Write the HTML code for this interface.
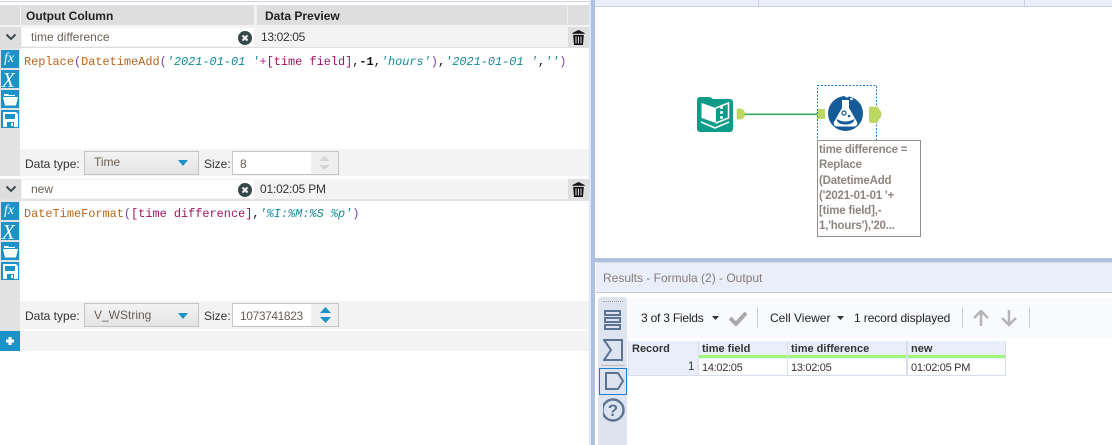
<!DOCTYPE html>
<html><head><meta charset="utf-8">
<style>
html,body{margin:0;padding:0;background:#fff}
#p{position:relative;width:1112px;height:445px;overflow:hidden;background:#fff;font-family:"Liberation Sans",sans-serif;font-size:12px;color:#222}
#p div,#p svg,#p span.a{position:absolute}
.t{white-space:nowrap;line-height:14px}
.c{white-space:pre;font-family:"Liberation Mono",monospace;font-size:11.9px;line-height:14px;font-weight:normal}
.fn{color:#b8651b}.b{color:#7a3fb0}.s{color:#0e8c96;font-style:italic}.f{color:#a3135f}.o{color:#d4148c}.k{color:#111}.br{color:#a3135f}
.btn{left:1px;width:18px;height:18px;background:#1b92c8}
</style></head><body><div id="p">

<!-- left panel -->
<div style="left:0;top:0;width:590px;height:445px;background:#fff"></div>
<div style="left:0;top:1px;width:590px;height:1px;background:#cfd3e6"></div>
<div style="left:0;top:5px;width:589px;height:20px;background:#dedede"></div>
<div style="left:20px;top:5px;width:1px;height:20px;background:#f2f2f2"></div>
<div style="left:254px;top:5px;width:3px;height:20px;background:#f2f2f2"></div>
<div style="left:567px;top:5px;width:1px;height:20px;background:#f2f2f2"></div>
<div class="t" style="left:26px;top:9px;font-weight:bold;color:#222">Output Column</div>
<div class="t" style="left:265px;top:9px;font-weight:bold;color:#222">Data Preview</div>

<!-- row 1 -->
<div style="left:0;top:25px;width:589px;height:23px;background:#f3f3f3"></div>
<div style="left:0;top:27px;width:21px;height:20px;background:#dedede"></div>
<div style="left:22px;top:28px;width:232px;height:18px;background:#fff"></div>
<div style="left:0;top:47px;width:589px;height:1px;background:#dedede"></div>
<div style="left:568px;top:27px;width:21px;height:20px;background:#dedede"></div>
<svg style="left:5px;top:33px" width="12" height="8" viewBox="0 0 12 8"><path d="M1.500 1.500 6 6 10.500 1.500" fill="none" stroke="#3d4a4c" stroke-width="2"/></svg>
<div class="t" style="left:31px;top:30px;color:#6b5f55">time difference</div>
<svg style="left:238px;top:31px" width="14" height="14" viewBox="0 0 14 14"><circle cx="7" cy="7" r="7" fill="#36474a"/><path d="M4.500 4.500 9.500 9.500M9.500 4.500 4.500 9.500" stroke="#fff" stroke-width="2"/></svg>
<div class="t" style="left:261px;top:30px;color:#333;letter-spacing:-.35px">13:02:05</div>
<svg style="left:571px;top:29px" width="15" height="17" viewBox="0 0 15 16"><path d="M1 4.200C2 2.600 5 2 5.500 1.500 6 .5 9 .5 9.500 1.500 10 2 13 2.600 14 4.200Z" fill="#111"/><path d="M2.200 5.400h10.600L12 15.500H3Z" fill="#111"/><path d="M5 7v7M7.500 7v7M10 7v7" stroke="#dedede" stroke-width="1"/></svg>

<!-- side column 1 -->
<div style="left:0;top:48px;width:20px;height:130px;background:#e2e2e2"></div>
<div class="btn" style="top:50px"></div><div class="btn" style="top:70px"></div><div class="btn" style="top:90px"></div><div class="btn" style="top:110px"></div>
<div class="t" style="left:4px;top:51px;color:#fff;font:italic 14px 'Liberation Serif',serif">fx</div>
<div class="t" style="left:2px;top:68px;color:#fff;font:italic 21px 'Liberation Serif',serif">X</div>
<svg style="left:3px;top:93px" width="15" height="13" viewBox="0 0 15 13"><path d="M1 3V1h4l1 1h6v1ZM0 4h15l-2 8.500H2Z" fill="#fff"/></svg>
<svg style="left:3px;top:112px" width="15" height="15" viewBox="0 0 15 15"><path d="M0 0h13l2 2v13H0Z" fill="#fff"/><path d="M2 2h10v5H2ZM4 10h7v5H4Z" fill="#1b92c8"/><path d="M8 11h2v3H8Z" fill="#fff"/></svg>

<div class="c" style="left:24px;top:55px"><span class="fn">Replace</span><span class="b">(</span><span class="fn">DatetimeAdd</span><span class="b">(</span><span class="s">'2021-01-01 '</span><span class="o">+</span><span class="br">[time field]</span><span class="k">,</span><b class="k">-1</b><span class="k">,</span><span class="s">'hours'</span><span class="b">)</span><span class="k">,</span><span class="s">'2021-01-01 '</span><span class="k">,</span><span class="s">''</span><span class="b">)</span></div>

<div style="left:20px;top:149px;width:569px;height:27px;background:#f3f3f3"></div>
<div class="t" style="left:25px;top:157px;color:#333">Data type:</div>
<div style="left:84px;top:151px;width:113px;height:22px;border:1px solid #c4c4c4;background:linear-gradient(#f3f3f3,#e4e4e4)"></div>
<div class="t" style="left:94px;top:155px;color:#6b5f55">Time</div>
<svg style="left:178px;top:160px" width="10" height="6"><path d="M0 0h10L5 6Z" fill="#1b92c8"/></svg>
<div class="t" style="left:204px;top:157px;color:#333">Size:</div>
<div style="left:232px;top:151px;width:105px;height:22px;border:1px solid #c4c4c4;background:#fff"></div>
<div style="left:311px;top:152px;width:27px;height:22px;background:#efefef"></div>
<svg style="left:319px;top:156px" width="11" height="15"><path d="M0 5h11L5.500 0ZM0 9h11L5.500 14Z" fill="#d6d6d6"/></svg>
<div class="t" style="left:240px;top:157px;color:#6b5f55">8</div>

<!-- row 2 -->
<div style="left:0;top:176px;width:589px;height:3px;background:#fff"></div>
<div style="left:0;top:179px;width:21px;height:20px;background:#dedede"></div>
<div style="left:21px;top:179px;width:568px;height:22px;background:#f3f3f3"></div>
<div style="left:22px;top:180px;width:232px;height:18px;background:#fff"></div>
<div style="left:568px;top:179px;width:21px;height:20px;background:#dedede"></div>
<div style="left:0;top:199px;width:589px;height:2px;background:#e3e3e3"></div>
<svg style="left:5px;top:185px" width="12" height="8" viewBox="0 0 12 8"><path d="M1.500 1.500 6 6 10.500 1.500" fill="none" stroke="#3d4a4c" stroke-width="2"/></svg>
<div class="t" style="left:31px;top:182px;color:#6b5f55">new</div>
<svg style="left:238px;top:183px" width="14" height="14" viewBox="0 0 14 14"><circle cx="7" cy="7" r="7" fill="#36474a"/><path d="M4.500 4.500 9.500 9.500M9.500 4.500 4.500 9.500" stroke="#fff" stroke-width="2"/></svg>
<div class="t" style="left:260px;top:182px;color:#333;letter-spacing:-.2px">01:02:05 PM</div>
<svg style="left:571px;top:181px" width="15" height="17" viewBox="0 0 15 16"><path d="M1 4.200C2 2.600 5 2 5.500 1.500 6 .5 9 .5 9.500 1.500 10 2 13 2.600 14 4.200Z" fill="#111"/><path d="M2.200 5.400h10.600L12 15.500H3Z" fill="#111"/><path d="M5 7v7M7.500 7v7M10 7v7" stroke="#dedede" stroke-width="1"/></svg>

<!-- side column 2 -->
<div style="left:0;top:201px;width:20px;height:130px;background:#e2e2e2"></div>
<div class="btn" style="top:202px"></div><div class="btn" style="top:222px"></div><div class="btn" style="top:242px"></div><div class="btn" style="top:262px"></div>
<div class="t" style="left:4px;top:203px;color:#fff;font:italic 14px 'Liberation Serif',serif">fx</div>
<div class="t" style="left:2px;top:220px;color:#fff;font:italic 21px 'Liberation Serif',serif">X</div>
<svg style="left:3px;top:245px" width="15" height="13" viewBox="0 0 15 13"><path d="M1 3V1h4l1 1h6v1ZM0 4h15l-2 8.500H2Z" fill="#fff"/></svg>
<svg style="left:3px;top:264px" width="15" height="15" viewBox="0 0 15 15"><path d="M0 0h13l2 2v13H0Z" fill="#fff"/><path d="M2 2h10v5H2ZM4 10h7v5H4Z" fill="#1b92c8"/><path d="M8 11h2v3H8Z" fill="#fff"/></svg>

<div class="c" style="left:24px;top:207px"><span class="fn">DateTimeFormat</span><span class="b">(</span><span class="br">[time difference]</span><span class="k">,</span><span class="s">'%I:%M:%S %p'</span><span class="b">)</span></div>

<div style="left:20px;top:301px;width:569px;height:28px;background:#f3f3f3"></div>
<div class="t" style="left:25px;top:309px;color:#333">Data type:</div>
<div style="left:84px;top:303px;width:113px;height:22px;border:1px solid #c4c4c4;background:linear-gradient(#f3f3f3,#e4e4e4)"></div>
<div class="t" style="left:94px;top:308px;color:#6b5f55">V_WString</div>
<svg style="left:178px;top:313px" width="10" height="6"><path d="M0 0h10L5 6Z" fill="#1b92c8"/></svg>
<div class="t" style="left:204px;top:309px;color:#333">Size:</div>
<div style="left:232px;top:303px;width:105px;height:22px;border:1px solid #c4c4c4;background:#fff"></div>
<div style="left:311px;top:304px;width:27px;height:22px;background:#efefef"></div>
<svg style="left:320px;top:307px" width="11" height="16"><path d="M0 6h11L5.500 0ZM0 10h11L5.500 16Z" fill="#1b92c8"/></svg>
<div class="t" style="left:240px;top:309px;color:#6b5f55;letter-spacing:-.4px">1073741823</div>

<!-- add row -->
<div style="left:0;top:331px;width:589px;height:20px;background:#f3f3f3"></div>
<div style="left:0;top:331px;width:20px;height:20px;background:#1b92c8"></div>
<svg style="left:5px;top:336px" width="10" height="10"><path d="M5 1v8M1 5h8" stroke="#fff" stroke-width="3"/></svg>

<!-- vertical splitter -->
<div style="left:589px;top:0;width:2px;height:445px;background:#dfe6f4"></div>
<div style="left:591px;top:0;width:4px;height:445px;background:#afc0e0"></div>

<!-- canvas ruler -->
<div style="left:595px;top:0;width:517px;height:6px;background:#e9eefa"></div>
<div style="left:595px;top:6px;width:517px;height:1px;background:#c5d1ea"></div>
<div style="left:758px;top:0;width:1px;height:6px;background:#c5d1ea"></div>
<div style="left:1024px;top:0;width:1px;height:6px;background:#c5d1ea"></div>

<!-- workflow -->
<svg style="left:695px;top:95px" width="150" height="50" viewBox="0 0 150 50">
<path d="M2 5a3 3 0 0 1 3-3h10l3 2h17a3 3 0 0 1 3 3v27a3 3 0 0 1-3 3H5a3 3 0 0 1-3-3Z" fill="#0d9c8a"/>
<path d="M6.500 8 21 13V28L6.500 23Z" fill="#fff"/>
<path d="M21 13 33.500 8V23L21 28" fill="none" stroke="#fff" stroke-width="1.500"/>
<path d="M6 27 20 33 34 27" fill="none" stroke="#fff" stroke-width="1.500"/>
<circle cx="26.500" cy="12.500" r="1.500" fill="#fff"/><circle cx="26.500" cy="17.500" r="1.500" fill="#fff"/><circle cx="26.500" cy="22.500" r="1.500" fill="#fff"/>
<path d="M42 14h5l3 3.500v3L47 24h-5Z" fill="#bcd95f" stroke="#a9c850" stroke-width=".5"/>
<path d="M50 19.300h74" stroke="#3aa760" stroke-width="1.600"/>
<rect x="122" y="14" width="8" height="10" fill="#bcd95f"/>
</svg>
<svg style="left:817px;top:85px" width="70" height="56" viewBox="0 0 70 56">
<rect x=".5" y=".5" width="59" height="55" fill="none" stroke="#1b7fd0" stroke-dasharray="2 1.500"/>
<circle cx="28.500" cy="28.500" r="17.500" fill="#155b97"/>
<path d="M25 15h7v8l8 14a3 3 0 0 1-2.600 4.500H19.600a3 3 0 0 1-2.600-4.500l8-14Z" fill="#fff"/>
<path d="M19.500 34q9 5 18 0q-1 5.500-9 5.500t-9-5.500Z" fill="#155b97"/>
<circle cx="27" cy="28" r="2" fill="none" stroke="#155b97" stroke-width="1.200"/><circle cx="32" cy="31" r="1.300" fill="#155b97"/>
<circle cx="29.500" cy="13" r="0" fill="#fff"/><circle cx="30" cy="10.500" r="2" fill="#fff"/><circle cx="34.500" cy="14" r="1.300" fill="#fff"/>
<path d="M52.500 22H60l4 5v4l-4 6.500H52.500Z" fill="#bcd95f" stroke="#a9c850" stroke-width=".5"/>
</svg>
<div style="left:817px;top:140px;width:102px;height:95px;border:1px solid #8f8f8f;background:#fff"></div>
<div style="left:819px;top:143px;width:100px;font-weight:bold;font-size:11.500px;line-height:15.300px;color:#8f8580;white-space:nowrap;letter-spacing:-.2px">time difference =<br>Replace<br>(DatetimeAdd<br>('2021-01-01 '+<br>[time field],-<br>1,'hours'),'20...</div>

<!-- horizontal splitter -->
<div style="left:595px;top:258px;width:517px;height:4px;background:#afc0e0"></div>

<!-- results -->
<div style="left:595px;top:262px;width:517px;height:183px;background:#fff"></div>
<div style="left:596px;top:262px;width:516px;height:31px;background:#e9eefa;border-top:1px solid #d6dbe8;box-sizing:border-box;border-bottom:1px solid #c7c7c7"></div>
<div class="t" style="left:603px;top:271px;color:#857c76">Results - Formula (2) - Output</div>
<div style="left:598px;top:297px;width:29px;height:148px;background:#dde4f0;border-radius:3px 3px 0 0"></div>
<div style="left:603px;top:301px;width:20px;height:1px;border-top:1px dotted #9a9a9a"></div>
<div style="left:627px;top:298px;width:485px;height:40px;background:#f8fafe"></div>
<svg style="left:603px;top:310px" width="22" height="112" viewBox="0 0 22 112">
<g fill="none" stroke="#5d7394" stroke-width="2"><rect x="2" y="1" width="15" height="4"/><rect x="2" y="8" width="15" height="4"/><rect x="2" y="15" width="15" height="4"/>
<path d="M1 30H19V50H1L8 40Z"/><path d="M3 63H15L20 71 15 79H3Z"/><circle cx="10" cy="100" r="10.500" stroke-width="2.400"/></g>
<text x="10" y="106" text-anchor="middle" font-family="Liberation Sans" font-weight="bold" font-size="17" fill="#5d7394">?</text>
</svg>
<div style="left:601px;top:365px;width:24px;height:1px;background:#bfbfbf"></div>
<div style="left:599px;top:368px;width:26px;height:25px;border:1px solid #1b7fd0"></div>

<div class="t" style="left:641px;top:311px;color:#222;letter-spacing:-.22px">3 of 3 Fields</div>
<svg style="left:712px;top:316px" width="8" height="5"><path d="M0 0h7L3.500 4Z" fill="#333"/></svg>
<svg style="left:729px;top:311px" width="18" height="15"><path d="M1 7 7 13 17 2" fill="none" stroke="#a9a9a9" stroke-width="4"/></svg>
<div style="left:757px;top:308px;width:1px;height:20px;background:#c9c9c9"></div>
<div class="t" style="left:770px;top:311px;color:#222">Cell Viewer</div>
<svg style="left:837px;top:316px" width="8" height="5"><path d="M0 0h7L3.500 4Z" fill="#333"/></svg>
<div class="t" style="left:854px;top:311px;color:#222;letter-spacing:-.1px">1 record displayed</div>
<div style="left:962px;top:308px;width:1px;height:20px;background:#c9c9c9"></div>
<svg style="left:972px;top:309px" width="46" height="18"><path d="M9 17V2M2 9 9 2 16 9M37 1V16M30 9 37 16 44 9" fill="none" stroke="#b5b5b5" stroke-width="2.500"/></svg>
<div style="left:1029px;top:308px;width:1px;height:20px;background:#c9c9c9"></div>

<!-- table -->
<div style="left:628px;top:341px;width:378px;height:35px;background:#d6dfef"></div>
<div style="left:629px;top:341px;width:69px;height:18px;background:#e9eefa"></div>
<div style="left:699px;top:341px;width:88px;height:18px;background:#e9eefa"></div>
<div style="left:788px;top:341px;width:118px;height:18px;background:#e9eefa"></div>
<div style="left:908px;top:341px;width:97px;height:18px;background:#e9eefa"></div>
<div style="left:699px;top:355px;width:88px;height:3px;background:#a0f57e"></div>
<div style="left:788px;top:355px;width:118px;height:3px;background:#a0f57e"></div>
<div style="left:908px;top:355px;width:97px;height:3px;background:#a0f57e"></div>
<div style="left:629px;top:359px;width:69px;height:16px;background:#e9eefa"></div>
<div style="left:699px;top:359px;width:88px;height:16px;background:#fff"></div>
<div style="left:788px;top:359px;width:118px;height:16px;background:#fff"></div>
<div style="left:908px;top:359px;width:97px;height:16px;background:#fff"></div>
<div class="t" style="left:632px;top:342px;font-weight:bold;font-size:11px;color:#333">Record</div>
<div class="t" style="left:702px;top:342px;font-weight:bold;font-size:11px;color:#333">time field</div>
<div class="t" style="left:791px;top:342px;font-weight:bold;font-size:11px;color:#333">time difference</div>
<div class="t" style="left:911px;top:342px;font-weight:bold;font-size:11px;color:#333">new</div>
<div class="t" style="left:688px;top:360px;font-size:11.500px;color:#333">1</div>
<div class="t" style="left:702px;top:361px;font-size:11px;color:#333;letter-spacing:-.3px">14:02:05</div>
<div class="t" style="left:791px;top:361px;font-size:11px;color:#333;letter-spacing:-.3px">13:02:05</div>
<div class="t" style="left:911px;top:361px;font-size:11px;color:#333;letter-spacing:-.3px">01:02:05 PM</div>

</div></body></html>
